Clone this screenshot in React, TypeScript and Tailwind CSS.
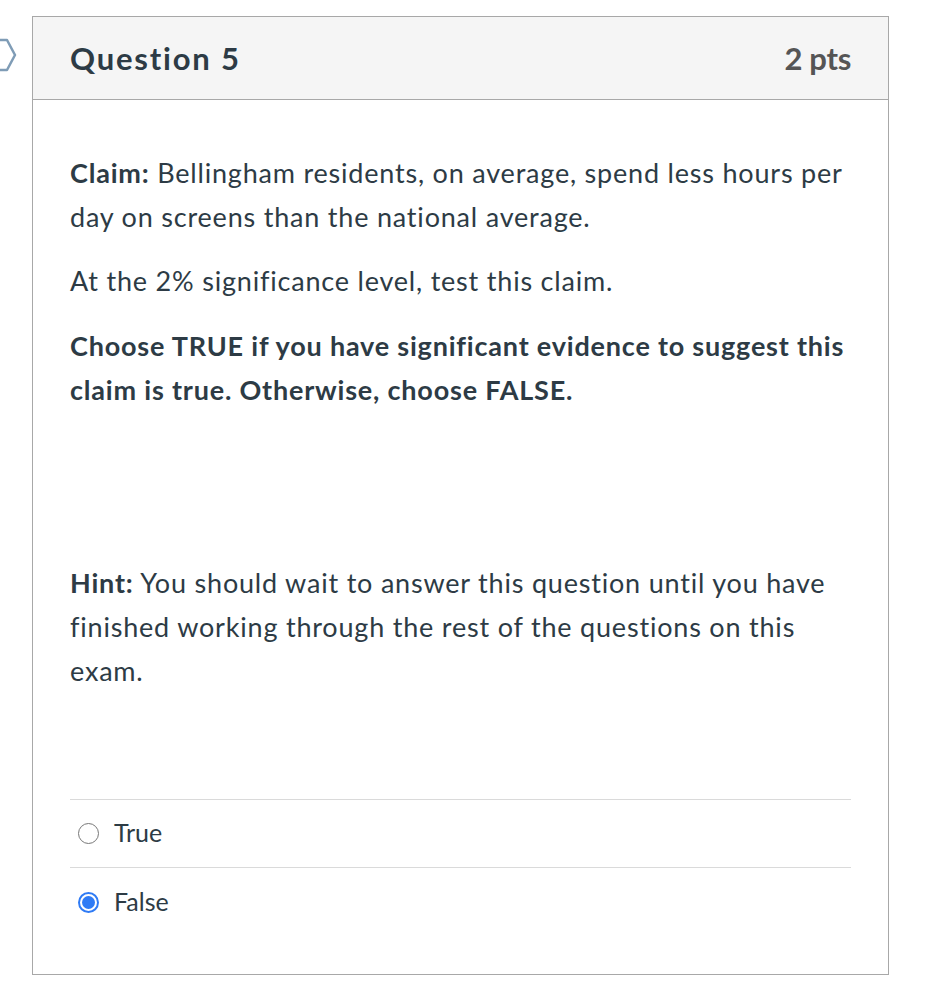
import React from "react";

export default function App() {
  return (
    <div className="relative min-h-[992px] w-[926px] bg-white font-['Lato','Noto_Sans',sans-serif] text-[#2d3b45]">
      {/* flag marker, cut off at the left edge */}
      <svg
        className="absolute left-0 top-[38px]"
        width="18"
        height="34"
        viewBox="0 0 18 34"
      >
        <path
          d="M-20 2 H7 L15 17 L7 32 H-20"
          fill="none"
          stroke="#7f9cb6"
          strokeWidth="2.5"
          strokeLinejoin="round"
        />
      </svg>

      <div className="pl-[32px] pr-[37px] pt-[16px]">
        <div className="border border-[#a8a8a8]">
          <div className="flex h-[83px] items-center justify-between border-b border-[#a8a8a8] bg-[#f5f5f5] px-[37px]">
            <h2 className="text-[31px] font-bold tracking-[1.8px]">Question 5</h2>
            <span className="text-[31px] font-bold tracking-[-0.3px] text-[#555]">
              2 pts
            </span>
          </div>

          <div className="px-[37px] pb-[38px] pt-[51px] text-[27px] leading-[44px] tracking-[0.8px]">
            <p>
              <strong>Claim:</strong> Bellingham residents, on average, spend
              less hours per day on screens than the national average.
            </p>
            <p className="mt-[20px]">
              At the 2% significance level, test this claim.
            </p>
            <p className="mt-[21px] font-bold">
              Choose TRUE if you have significant evidence to suggest this
              claim is true. Otherwise, choose FALSE.
            </p>
            <p className="mt-[149px]">
              <strong>Hint:</strong> You should wait to answer this question
              until you have finished working through the rest of the
              questions on this exam.
            </p>

            <div className="mt-[106px] border-t border-[#dadada] text-[25px] tracking-normal">
              <label className="flex h-[68px] items-center gap-[15px] border-b border-[#dadada] pl-[8px]">
                <span className="h-[21px] w-[21px] rounded-full border-[1.5px] border-[#777]" />
                <span className="-mt-[3px]">True</span>
              </label>
              <label className="flex h-[68px] items-center gap-[15px] pl-[8px]">
                <span className="flex h-[21px] w-[21px] items-center justify-center rounded-full border-[2px] border-[#2f7bf5]">
                  <span className="h-[13px] w-[13px] rounded-full bg-[#2f7bf5]" />
                </span>
                <span className="-mt-[2px]">False</span>
              </label>
            </div>
          </div>
        </div>
      </div>
    </div>
  );
}
